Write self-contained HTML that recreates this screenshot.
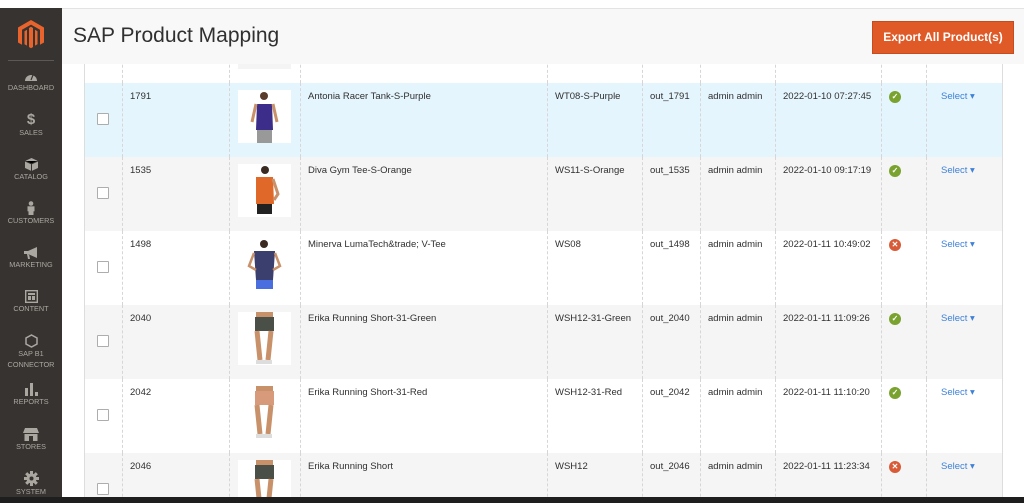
<!DOCTYPE html>
<html><head><meta charset="utf-8"><style>
*{margin:0;padding:0;box-sizing:border-box}
body{width:1024px;height:503px;overflow:hidden;background:#fff;font-family:"Liberation Sans",sans-serif;position:relative}
#side{position:absolute;left:0;top:8px;width:62px;height:489px;background:#373330}
.ni{position:absolute;left:0;width:62px;text-align:center;color:#aaa6a0;font-size:7.3px;line-height:12px}
.ni svg{display:block;margin:0 auto}
#hdr{position:absolute;left:62px;top:8px;width:962px;height:56px;background:#f8f8f8;border-top:1px solid #e3e3e3}
#hdr h1{position:absolute;left:11px;top:15px;font-weight:normal;font-size:21px;color:#303030}
#btn{position:absolute;left:810px;top:12px;width:142px;height:33px;background:#e05a27;border:1px solid #c64c1d;color:#fff;font-size:12px;font-weight:bold;text-align:center;line-height:31px}
#tbl{position:absolute;left:84px;top:64px;width:919px;height:433px;overflow:hidden;border-left:1px solid #ddd;border-right:1px solid #ddd}
.row{position:absolute;left:0;width:917px;height:74px}
.c{position:absolute;top:0;height:100%;border-left:1px dashed #d6d6d6;font-size:9.5px;color:#303030;padding:8px 0 0 7px}
.cb{position:absolute;left:12px;top:30px;width:12px;height:12px;border:1px solid #adadad;background:#fff;border-radius:1px}
.th{position:absolute;left:8px;top:7px;width:53px;height:53px;background:#fff}
.ok,.er{display:inline-block;width:12px;height:12px;border-radius:50%;color:#fff;font-size:8px;line-height:12px;text-align:center;font-weight:bold;margin:-1px 0 0 0}
.ok{background:#79a22e}.er{background:#d85a36}
.sel{color:#3e81d8;font-size:9.5px}
#bot{position:absolute;left:0;top:497px;width:1024px;height:6px;background:#1e1e1e}
</style></head><body>
<div id="side">
 <svg style="position:absolute;left:18px;top:12px" width="26" height="30" viewBox="0 0 26 30"><path d="M13 0 L26 7.5 V22.5 L22 24.8 V9.8 L13 4.6 L4 9.8 V24.8 L0 22.5 V7.5Z M11 8 L13 6.8 L15 8 V27 L13 28.2 L11 27Z M6.5 11.3 L9 9.8 V25.6 L6.5 24.2Z M19.5 11.3 L17 9.8 V25.6 L19.5 24.2Z" fill="#e8642c"/></svg>
 <div style="position:absolute;left:8px;top:52px;width:46px;height:1px;background:#5d5853"></div>
 <div class="ni" style="top:63px"><svg width="14" height="11" viewBox="0 0 14 11"><path d="M1 10 A6 6 0 1 1 13 10Z" fill="#aaa6a0"/><path d="M7 9 L9 4" stroke="#373330" stroke-width="1.2"/></svg>DASHBOARD</div>
 <div class="ni" style="top:104px"><div style="font-size:15px;font-weight:bold;line-height:15px">$</div>SALES</div>
 <div class="ni" style="top:150px"><svg width="13" height="13" viewBox="0 0 13 13"><path d="M6.5 0 L13 3 V10 L6.5 13 L0 10 V3Z" fill="#aaa6a0"/><path d="M0 3 L6.5 6 L13 3 M6.5 6 V13" stroke="#373330" stroke-width="1"/></svg>CATALOG</div>
 <div class="ni" style="top:193px"><svg width="10" height="14" viewBox="0 0 10 14"><circle cx="5" cy="2.5" r="2.3" fill="#aaa6a0"/><rect x="1.5" y="5.3" width="7" height="5" fill="#aaa6a0"/><rect x="2.5" y="10" width="5" height="4" fill="#aaa6a0"/></svg>CUSTOMERS</div>
 <div class="ni" style="top:239px"><svg width="14" height="12" viewBox="0 0 14 12"><path d="M0 4 H4 L13 0 V11 L4 7 H0Z M3 7 L4 12 H6 L5 7Z" fill="#aaa6a0"/></svg>MARKETING</div>
 <div class="ni" style="top:282px"><svg width="13" height="13" viewBox="0 0 13 13"><rect x="0.7" y="0.7" width="11.6" height="11.6" fill="none" stroke="#aaa6a0" stroke-width="1.4"/><rect x="3" y="3" width="7" height="2" fill="#aaa6a0"/><rect x="3" y="6" width="3" height="4" fill="#aaa6a0"/><rect x="7" y="6" width="3" height="4" fill="#aaa6a0"/></svg>CONTENT</div>
 <div class="ni" style="top:326px"><svg width="13" height="14" viewBox="0 0 13 14"><path d="M6.5 1 L12 4 V10 L6.5 13 L1 10 V4Z" fill="none" stroke="#aaa6a0" stroke-width="1.5"/></svg><div style="line-height:11px">SAP B1<br>CONNECTOR</div></div>
 <div class="ni" style="top:374px"><svg width="13" height="14" viewBox="0 0 13 14"><rect x="0" y="6" width="3" height="8" fill="#aaa6a0"/><rect x="5" y="1" width="3" height="13" fill="#aaa6a0"/><rect x="10" y="10" width="3" height="4" fill="#aaa6a0"/></svg>REPORTS</div>
 <div class="ni" style="top:420px"><svg width="16" height="13" viewBox="0 0 16 13"><path d="M2 0 H14 L16 5 H0Z" fill="#aaa6a0"/><rect x="1.5" y="6" width="13" height="7" fill="#aaa6a0"/><rect x="6" y="8" width="4" height="5" fill="#373330"/></svg>STORES</div>
 <div class="ni" style="top:463px"><svg width="15" height="15" viewBox="0 0 15 15"><circle cx="7.5" cy="7.5" r="5" fill="#aaa6a0"/><path d="M7.5 0 V15 M0 7.5 H15 M2.2 2.2 L12.8 12.8 M12.8 2.2 L2.2 12.8" stroke="#aaa6a0" stroke-width="3"/><circle cx="7.5" cy="7.5" r="2" fill="#373330"/></svg>SYSTEM</div>
</div>
<div id="hdr"><h1>SAP Product Mapping</h1><div id="btn">Export All Product(s)</div></div>
<div id="tbl">
 <div class="row" style="top:-55px;background:#fff">
  <div class="c" style="left:37px;width:107px"></div><div class="c" style="left:144px;width:71px"><div class="th" style="top:55px;height:5px;background:#f4f4f4"></div></div><div class="c" style="left:215px"></div><div class="c" style="left:462px"></div><div class="c" style="left:557px"></div><div class="c" style="left:615px"></div><div class="c" style="left:690px"></div><div class="c" style="left:796px"></div><div class="c" style="left:841px"></div>
 </div>
 <div class="row" style="top:19px;background:#e5f5fd">
  <div class="cb"></div>
  <div class="c" style="left:37px">1791</div>
  <div class="c" style="left:144px"><div class="th"><svg width="53" height="53"><circle cx="26" cy="6" r="4" fill="#5a3c2c"/><path d="M19 14 L34 14 L35 40 L18 40Z" fill="#3d2d8a"/><rect x="19" y="40" width="15" height="13" fill="#999"/><path d="M18 14 L14 32 M35 14 L39 32" stroke="#c8916a" stroke-width="3"/></svg></div></div>
  <div class="c" style="left:215px">Antonia Racer Tank-S-Purple</div>
  <div class="c" style="left:462px">WT08-S-Purple</div>
  <div class="c" style="left:557px">out_1791</div>
  <div class="c" style="left:615px">admin admin</div>
  <div class="c" style="left:690px">2022-01-10 07:27:45</div>
  <div class="c" style="left:796px"><span class="ok">✓</span></div>
  <div class="c" style="left:841px;padding-left:14px"><span class="sel">Select ▾</span></div>
 </div>
 <div class="row" style="top:93px;background:#f5f5f5">
  <div class="cb"></div>
  <div class="c" style="left:37px">1535</div>
  <div class="c" style="left:144px"><div class="th"><svg width="53" height="53"><circle cx="27" cy="6" r="4" fill="#3a2a22"/><path d="M18 13 L35 13 L36 40 L18 40Z" fill="#e0692a"/><rect x="19" y="40" width="15" height="10" fill="#222"/><path d="M35 15 L40 30 L36 36" stroke="#c8916a" stroke-width="3" fill="none"/></svg></div></div>
  <div class="c" style="left:215px">Diva Gym Tee-S-Orange</div>
  <div class="c" style="left:462px">WS11-S-Orange</div>
  <div class="c" style="left:557px">out_1535</div>
  <div class="c" style="left:615px">admin admin</div>
  <div class="c" style="left:690px">2022-01-10 09:17:19</div>
  <div class="c" style="left:796px"><span class="ok">✓</span></div>
  <div class="c" style="left:841px;padding-left:14px"><span class="sel">Select ▾</span></div>
 </div>
 <div class="row" style="top:167px;background:#fff">
  <div class="cb"></div>
  <div class="c" style="left:37px">1498</div>
  <div class="c" style="left:144px"><div class="th"><svg width="53" height="53"><circle cx="26" cy="6" r="4" fill="#3a2a22"/><path d="M16 13 L37 13 L35 42 L18 42Z" fill="#3a3f6e"/><rect x="18" y="42" width="17" height="9" fill="#4a6ee0"/><path d="M16 15 L11 28 L18 32 M37 15 L42 28 L35 32" stroke="#c8916a" stroke-width="2.5" fill="none"/></svg></div></div>
  <div class="c" style="left:215px">Minerva LumaTech&amp;trade; V-Tee</div>
  <div class="c" style="left:462px">WS08</div>
  <div class="c" style="left:557px">out_1498</div>
  <div class="c" style="left:615px">admin admin</div>
  <div class="c" style="left:690px">2022-01-11 10:49:02</div>
  <div class="c" style="left:796px"><span class="er">✕</span></div>
  <div class="c" style="left:841px;padding-left:14px"><span class="sel">Select ▾</span></div>
 </div>
 <div class="row" style="top:241px;background:#f5f5f5">
  <div class="cb"></div>
  <div class="c" style="left:37px">2040</div>
  <div class="c" style="left:144px"><div class="th"><svg width="53" height="53"><rect x="18" y="0" width="17" height="5" fill="#c8916a"/><rect x="17" y="5" width="19" height="14" fill="#4a4f48"/><path d="M19 19 L22 48 M33 19 L30 48" stroke="#c8916a" stroke-width="5"/><rect x="18" y="48" width="16" height="4" fill="#ddd"/></svg></div></div>
  <div class="c" style="left:215px">Erika Running Short-31-Green</div>
  <div class="c" style="left:462px">WSH12-31-Green</div>
  <div class="c" style="left:557px">out_2040</div>
  <div class="c" style="left:615px">admin admin</div>
  <div class="c" style="left:690px">2022-01-11 11:09:26</div>
  <div class="c" style="left:796px"><span class="ok">✓</span></div>
  <div class="c" style="left:841px;padding-left:14px"><span class="sel">Select ▾</span></div>
 </div>
 <div class="row" style="top:315px;background:#fff">
  <div class="cb"></div>
  <div class="c" style="left:37px">2042</div>
  <div class="c" style="left:144px"><div class="th"><svg width="53" height="53"><rect x="18" y="0" width="17" height="5" fill="#c8916a"/><rect x="17" y="5" width="19" height="14" fill="#d79a7a"/><path d="M19 19 L22 48 M33 19 L30 48" stroke="#c8916a" stroke-width="5"/><rect x="18" y="48" width="16" height="4" fill="#ddd"/></svg></div></div>
  <div class="c" style="left:215px">Erika Running Short-31-Red</div>
  <div class="c" style="left:462px">WSH12-31-Red</div>
  <div class="c" style="left:557px">out_2042</div>
  <div class="c" style="left:615px">admin admin</div>
  <div class="c" style="left:690px">2022-01-11 11:10:20</div>
  <div class="c" style="left:796px"><span class="ok">✓</span></div>
  <div class="c" style="left:841px;padding-left:14px"><span class="sel">Select ▾</span></div>
 </div>
 <div class="row" style="top:389px;background:#f5f5f5">
  <div class="cb"></div>
  <div class="c" style="left:37px">2046</div>
  <div class="c" style="left:144px"><div class="th"><svg width="53" height="53"><rect x="18" y="0" width="17" height="5" fill="#c8916a"/><rect x="17" y="5" width="19" height="14" fill="#4a4f48"/><path d="M19 19 L22 48 M33 19 L30 48" stroke="#c8916a" stroke-width="5"/></svg></div></div>
  <div class="c" style="left:215px">Erika Running Short</div>
  <div class="c" style="left:462px">WSH12</div>
  <div class="c" style="left:557px">out_2046</div>
  <div class="c" style="left:615px">admin admin</div>
  <div class="c" style="left:690px">2022-01-11 11:23:34</div>
  <div class="c" style="left:796px"><span class="er">✕</span></div>
  <div class="c" style="left:841px;padding-left:14px"><span class="sel">Select ▾</span></div>
 </div>
</div>
<div id="bot"></div>
</body></html>
